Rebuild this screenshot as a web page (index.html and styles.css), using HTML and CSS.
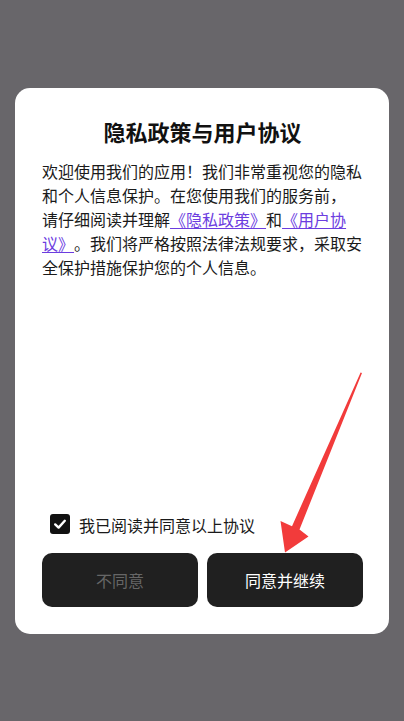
FILE: index.html
```html
<!DOCTYPE html>
<html lang="zh-CN">
<head>
<meta charset="utf-8">
<title>隐私政策与用户协议</title>
<link rel="stylesheet" href="styles.css">
</head>
<body>
<div class="screen">
  <div class="dialog">
    <h1 class="dialog-title">隐私政策与用户协议</h1>
    <p class="dialog-text">欢迎使用我们的应用！我们非常重视您的隐私和个人信息保护。在您使用我们的服务前，<br>请仔细阅读并理解<a class="link" href="#">《隐私政策》</a>和<a class="link" href="#">《用户协议》</a>。我们将严格按照法律法规要求，采取安全保护措施保护您的个人信息。</p>
    <div class="spacer"></div>
    <label class="agree">
      <span class="checkbox">
        <svg viewBox="0 0 20 20" width="20" height="20"><path d="M5.2 10.4 L8.6 13.6 L14.8 6.8" fill="none" stroke="#fff" stroke-width="2.4" stroke-linecap="round" stroke-linejoin="round"/></svg>
      </span>
      <span class="agree-text">我已阅读并同意以上协议</span>
    </label>
    <div class="actions">
      <button class="btn btn-decline">不同意</button>
      <button class="btn btn-accept">同意并继续</button>
    </div>
  </div>
  <svg class="annotation" viewBox="0 0 404 721" width="404" height="721">
    <polygon points="362,373 299.5,529.5 308.5,536.5 285,552.5 280.5,521 292,526.2 360.6,372.6" fill="#f23b3b"/>
  </svg>
</div>
</body>
</html>
```
FILE: styles.css
```css
* { box-sizing: border-box; }

html, body {
  margin: 0;
  padding: 0;
}

body {
  background: #68666a;
  font-family: "Noto Sans CJK SC", "Noto Sans", sans-serif;
  color: #111;
  text-spacing-trim: space-all;
}

.screen {
  position: relative;
  width: 404px;
  height: 721px;
  padding: 88px 15px 0 15px;
}

.dialog {
  height: 546px;
  background: #fff;
  border-radius: 15px;
  padding: 27px 26px 27px 27px;
  display: flex;
  flex-direction: column;
}

.dialog-title {
  margin: 0;
  font-size: 22px;
  font-weight: 700;
  text-align: center;
  line-height: normal;
  color: #111;
}

.dialog-text {
  margin: 12px 0 0 0;
  font-size: 16px;
  line-height: normal;
  color: #1a1a1a;
  text-spacing-trim: space-all;
}

.link {
  color: #6c3ddf;
  text-decoration: underline;
  text-decoration-thickness: 1px;
  text-underline-offset: 2px;
}

.spacer { flex: 1; }

.agree {
  display: flex;
  align-items: center;
  gap: 9px;
  margin-left: 8px;
  height: 24px;
}

.checkbox {
  width: 20px;
  height: 20px;
  border-radius: 3px;
  background: #111;
  display: flex;
}

.agree-text {
  font-size: 16px;
  color: #1a1a1a;
  position: relative;
  top: 1px;
}

.actions {
  margin-top: 17px;
  display: flex;
  gap: 9px;
}

.btn {
  flex: 1;
  height: 54px;
  border: none;
  border-radius: 10px;
  background: #202020;
  font-family: "Noto Sans CJK SC", "Noto Sans", sans-serif;
  font-size: 16px;
  padding: 0;
}

.btn-decline { color: #666; }
.btn-accept { color: #fff; }

.annotation {
  position: absolute;
  left: 0;
  top: 0;
  pointer-events: none;
}
```
